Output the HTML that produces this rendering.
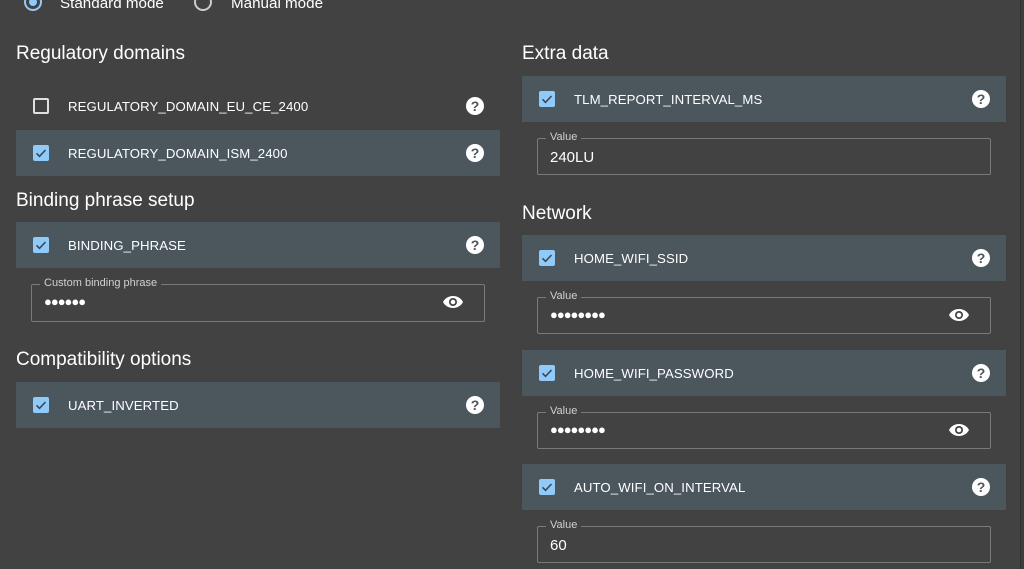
<!DOCTYPE html>
<html><head><style>
body{margin:0;width:1024px;height:569px;background:#424242;font-family:"Liberation Sans",sans-serif;color:#fff;position:relative;overflow:hidden}
.a{position:absolute}
.t{font-size:19px;color:#fff}
.row{position:absolute;height:46px;width:484px;background:#4c565d}
.row.nb{background:transparent}
.cb{position:absolute;left:17px;top:15px;width:16px;height:16px;background:#90caf9;border-radius:2px}
.cb svg{position:absolute;left:0;top:0}
.cb.off{background:transparent;box-sizing:border-box;border:2px solid #e0e0e0}
.lb{position:absolute;left:52px;top:16px;font-size:13.2px;letter-spacing:.1px}
.q{position:absolute;right:16px;top:14px;width:18px;height:18px;border-radius:50%;background:#fff;color:#4c565d;font-weight:bold;font-size:14px;text-align:center;line-height:18px}
.f{position:absolute;width:452px;height:36px;border:1px solid #7a7a7a;border-radius:2px;box-sizing:border-box}
.fl{position:absolute;left:8px;top:-8px;background:#424242;padding:0 4px;font-size:11px;color:#d0d0d0}
.fv{position:absolute;left:12px;top:10px;font-size:15px}
.dots{position:absolute;left:12px;top:9px;font-size:13px;letter-spacing:-1px}
.eye{position:absolute;right:20px;top:9px}
.rad{position:absolute;width:14px;height:14px;border-radius:50%;border:2px solid #ccc}
</style></head><body>
<div class="rad" style="left:24px;top:-7px;border-color:#90caf9"><div style="position:absolute;left:3px;top:3px;width:8px;height:8px;border-radius:50%;background:#90caf9"></div></div>
<div class="a" style="left:60px;top:-5px;font-size:15.2px">Standard mode</div>
<div class="rad" style="left:194px;top:-7px"></div>
<div class="a" style="left:231px;top:-5px;font-size:15.2px">Manual mode</div>

<div class="a t" style="left:16px;top:43px">Regulatory domains</div>
<div class="row nb" style="left:16px;top:83px"><div class="cb off"></div><div class="lb">REGULATORY_DOMAIN_EU_CE_2400</div><div class="q">?</div></div>
<div class="row" style="left:16px;top:130px"><div class="cb"><svg width="16" height="16"><path d="M3.5 8.3l3 3 6-6.3" stroke="#3a4a55" stroke-width="1.6" fill="none"/></svg></div><div class="lb">REGULATORY_DOMAIN_ISM_2400</div><div class="q">?</div></div>
<div class="a t" style="left:16px;top:190px">Binding phrase setup</div>
<div class="row" style="left:16px;top:222px"><div class="cb"><svg width="16" height="16"><path d="M3.5 8.3l3 3 6-6.3" stroke="#3a4a55" stroke-width="1.6" fill="none"/></svg></div><div class="lb">BINDING_PHRASE</div><div class="q">?</div></div>
<div class="f" style="left:31px;top:284px;width:454px;height:38px"><div class="fl">Custom binding phrase</div><div class="dots">●●●●●●</div><svg class="eye" width="22" height="16" viewBox="0 0 22 16"><path d="M11 2C6 2 2.5 5 1 8c1.5 3 5 6 10 6s8.5-3 10-6c-1.5-3-5-6-10-6z" fill="#fff"/><circle cx="11" cy="8" r="4" fill="#424242"/><circle cx="11" cy="8" r="2.3" fill="#fff"/></svg></div>
<div class="a t" style="left:16px;top:349px">Compatibility options</div>
<div class="row" style="left:16px;top:382px"><div class="cb"><svg width="16" height="16"><path d="M3.5 8.3l3 3 6-6.3" stroke="#3a4a55" stroke-width="1.6" fill="none"/></svg></div><div class="lb">UART_INVERTED</div><div class="q">?</div></div>

<div class="a t" style="left:522px;top:43px">Extra data</div>
<div class="row" style="left:522px;top:76px"><div class="cb"><svg width="16" height="16"><path d="M3.5 8.3l3 3 6-6.3" stroke="#3a4a55" stroke-width="1.6" fill="none"/></svg></div><div class="lb">TLM_REPORT_INTERVAL_MS</div><div class="q">?</div></div>
<div class="f" style="left:537px;top:138px;width:454px;height:37px"><div class="fl">Value</div><div class="fv">240LU</div></div>
<div class="a t" style="left:522px;top:203px">Network</div>
<div class="row" style="left:522px;top:235px"><div class="cb"><svg width="16" height="16"><path d="M3.5 8.3l3 3 6-6.3" stroke="#3a4a55" stroke-width="1.6" fill="none"/></svg></div><div class="lb">HOME_WIFI_SSID</div><div class="q">?</div></div>
<div class="f" style="left:537px;top:297px;width:454px;height:37px"><div class="fl">Value</div><div class="dots">●●●●●●●●</div><svg class="eye" width="22" height="16" viewBox="0 0 22 16"><path d="M11 2C6 2 2.5 5 1 8c1.5 3 5 6 10 6s8.5-3 10-6c-1.5-3-5-6-10-6z" fill="#fff"/><circle cx="11" cy="8" r="4" fill="#424242"/><circle cx="11" cy="8" r="2.3" fill="#fff"/></svg></div>
<div class="row" style="left:522px;top:350px"><div class="cb"><svg width="16" height="16"><path d="M3.5 8.3l3 3 6-6.3" stroke="#3a4a55" stroke-width="1.6" fill="none"/></svg></div><div class="lb">HOME_WIFI_PASSWORD</div><div class="q">?</div></div>
<div class="f" style="left:537px;top:412px;width:454px;height:37px"><div class="fl">Value</div><div class="dots">●●●●●●●●</div><svg class="eye" width="22" height="16" viewBox="0 0 22 16"><path d="M11 2C6 2 2.5 5 1 8c1.5 3 5 6 10 6s8.5-3 10-6c-1.5-3-5-6-10-6z" fill="#fff"/><circle cx="11" cy="8" r="4" fill="#424242"/><circle cx="11" cy="8" r="2.3" fill="#fff"/></svg></div>
<div class="row" style="left:522px;top:464px"><div class="cb"><svg width="16" height="16"><path d="M3.5 8.3l3 3 6-6.3" stroke="#3a4a55" stroke-width="1.6" fill="none"/></svg></div><div class="lb">AUTO_WIFI_ON_INTERVAL</div><div class="q">?</div></div>
<div class="f" style="left:537px;top:526px;width:454px;height:37px"><div class="fl">Value</div><div class="fv">60</div></div>
<div class="a" style="left:1020px;top:0;width:1px;height:569px;background:#333"></div>
<div class="a" style="left:1021px;top:0;width:3px;height:569px;background:#3d3d3d"></div>
</body></html>
